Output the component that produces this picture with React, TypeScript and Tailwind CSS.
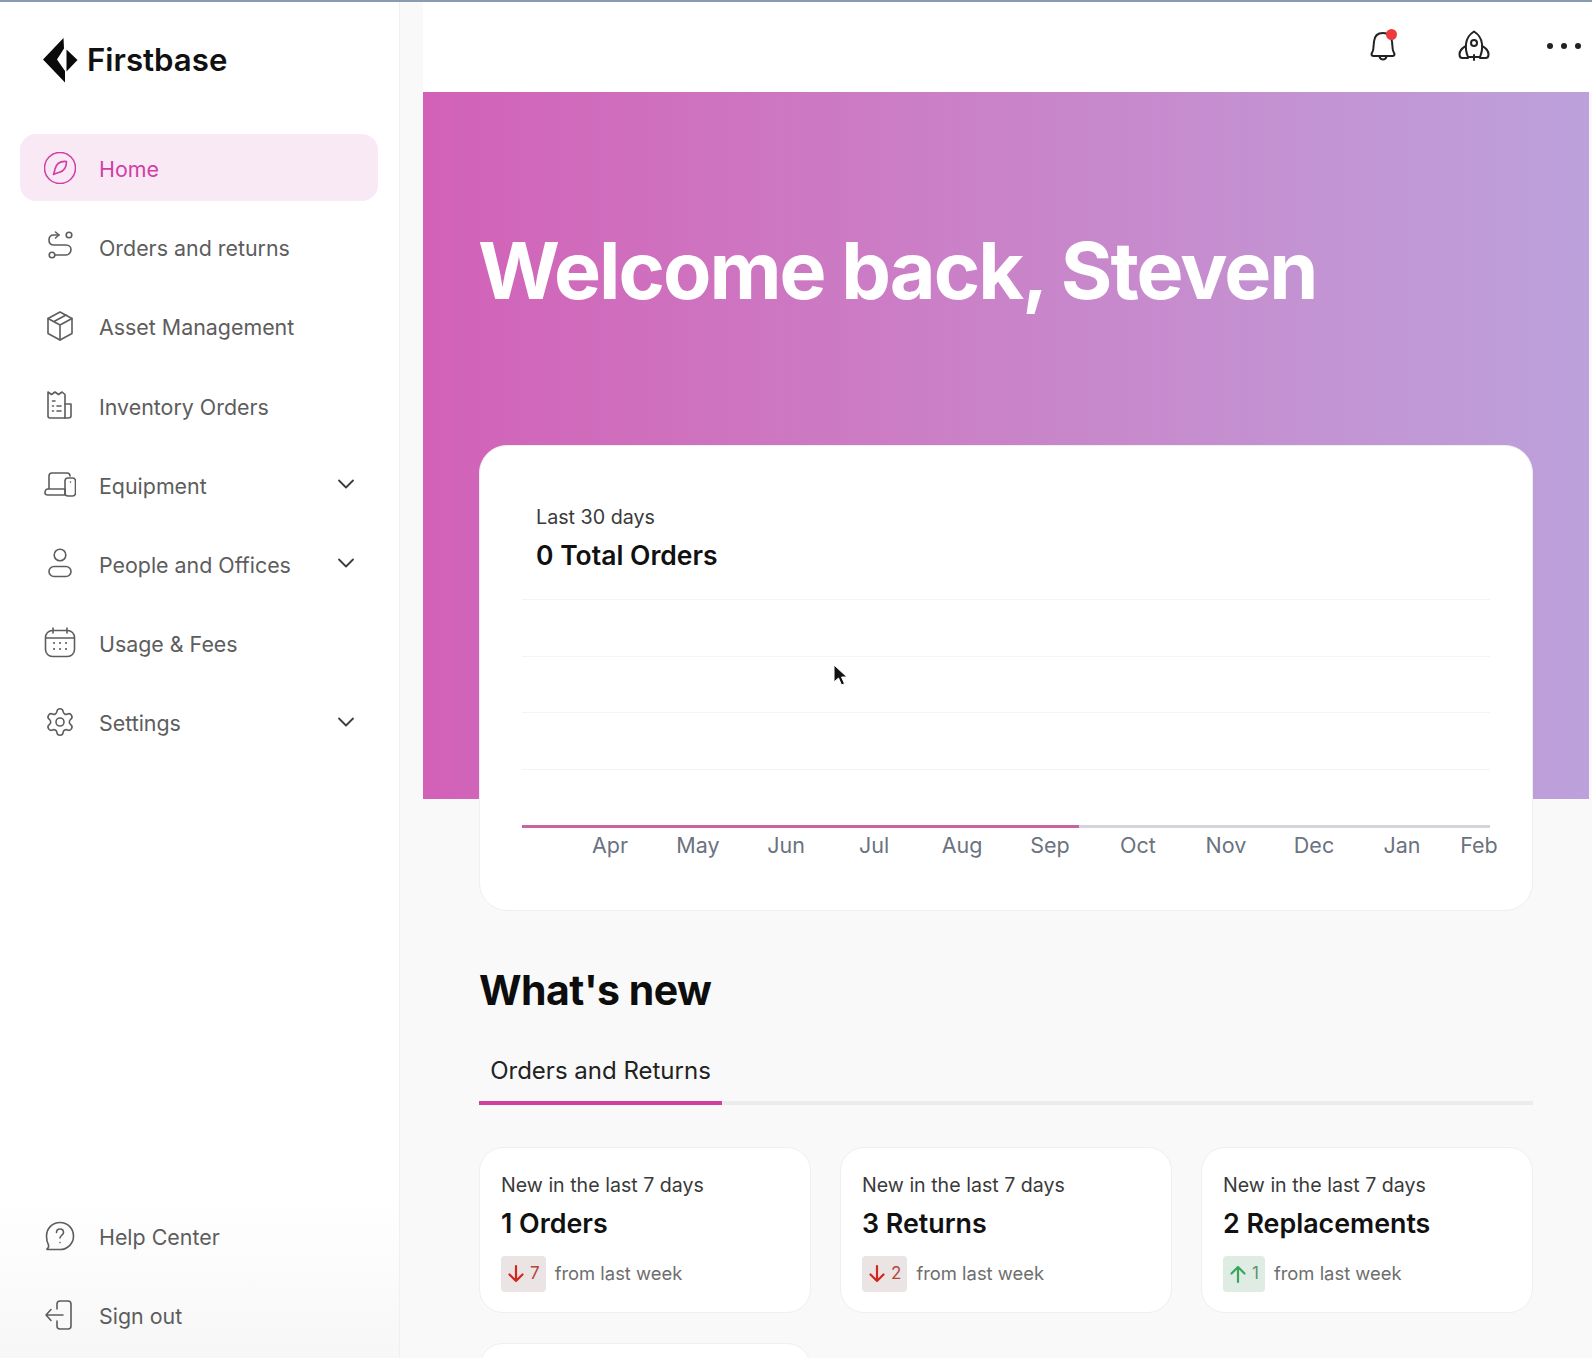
import React from "react";
import { Settings } from "lucide-react";

const font = { fontFamily: "Inter, 'Liberation Sans', sans-serif" };

function Ico({ children }: { children: React.ReactNode }) {
  return (
    <svg width="32" height="32" viewBox="0 0 32 32" fill="none" stroke="currentColor" strokeWidth="1.6" strokeLinecap="round" strokeLinejoin="round">
      {children}
    </svg>
  );
}

const icons: Record<string, React.ReactNode> = {
  home: (<><circle cx="16" cy="16" r="15.5" /><path d="M22.500 9.500c-5.500-.5-10 1.500-11.500 7.500-.2 1-.8 3.500-1.500 5.500 2-1 4.500-1.700 5.500-2 6-1.500 7.500-5.500 7.500-11z" /></>),
  orders: (<><path d="M15 4h-5C7 4 5 6 5 9s2 5 5 5h12c3 0 5 2 5 4.500S25 24 22 24H11" /><path d="M11.500 1 15 4l-3.500 3" /><circle cx="25" cy="4" r="2.800" /><circle cx="8" cy="24" r="2.800" /></>),
  asset: (<><path d="M16 2 28 8.500v15L16 30 4 23.500v-15z" /><path d="M4 8.500 16 15l12-6.500M16 15v15M22 5 10 11.500" /></>),
  inventory: (<><path d="M4 27V3l3.500 2.500L11 3l3.500 2.500L18 3l3 2.500V29H6c-1 0-2-1-2-2z" /><path d="M21 15h6v12c0 1.500-1.500 2-3 2h-3" /><path d="M8.500 12h2.500M8.500 17h1M13 17h4M8.500 22h1M13 22h4" /></>),
  equipment: (<><path d="M5 21V8c0-2 1-3 3-3h15c2 0 3 1 3 3M1 25c0-2 1-4 3-4h17v6H4c-1.500 0-3-.5-3-2z" /><rect x="21" y="10" width="10.500" height="18" rx="3" /><path d="M26.500 14v.1" /></>),
  people: (<><circle cx="16" cy="8" r="5.800" /><rect x="5" y="19.500" width="22" height="10" rx="5" /></>),
  usage: (<><rect x="1.500" y="3.500" width="29" height="26" rx="7" /><path d="M2 11h28M9 1v5M23 1v5" /><path d="M10 16h.1M16 16h.1M22 16h.1M10 22h.1M16 22h.1M22 22h.1" strokeWidth="2" /></>),
  help: (<><path d="M3 29c1.500-1 2-2 1.500-4C3 22.500 2.500 19.500 2.500 16 2.500 8.500 8.500 2.500 16 2.500S29.500 8.500 29.500 16 23.500 29.500 16 29.500H3z" /><path d="M12.500 12.500c0-2 1.500-3.500 3.500-3.500s3.500 1.500 3.500 3.500c0 2.500-3.500 3-3.500 5.500M16 22.500v.1" /></>),
  signout: (<><path d="M13 10V5c0-2 1-3 3-3h8c2 0 3 1 3 3v22c0 2-1 3-3 3h-8c-2 0-3-1-3-3v-5" /><path d="M19 16H2M7 10.500 2 16l5 5.500" /></>),
};

function Chevron() {
  return (
    <svg width="20" height="20" viewBox="0 0 20 20" fill="none" stroke="#3c3c3c" strokeWidth="1.800" strokeLinecap="round" strokeLinejoin="round">
      <path d="M3 6.500 10 13.500 17 6.500" />
    </svg>
  );
}

function NavItem({ icon, label, chev, active }: { icon: string; label: string; chev?: boolean; active?: boolean }) {
  return (
    <div className={`flex h-[67px] items-center rounded-[16px] pl-[24px] pr-[22px] ${active ? "bg-[#f9e9f5] text-[#d13fa6]" : "text-[#5d5d5d]"}`}>
      <span className="flex w-[32px] shrink-0 items-center justify-center">
        {icon === "settings" ? <Settings size={32} strokeWidth={1.2} /> : <Ico>{icons[icon]}</Ico>}
      </span>
      <span className="ml-[23px] flex-1 pt-[3px] text-[21.4px] leading-[30px]">{label}</span>
      {chev && <Chevron />}
    </div>
  );
}

function Stat({ title, n, dir }: { title: string; n: number; dir: "up" | "down" }) {
  const up = dir === "up";
  return (
    <div className="h-[166px] rounded-[24px] border border-[#efefef] bg-white pl-[21px] pt-[22px]">
      <div className="text-[19.6px] leading-[30px] text-[#3a3a3a]">New in the last 7 days</div>
      <div className="mt-[1px] text-[26.8px] font-semibold leading-[44px] text-[#111]">{title}</div>
      <div className="mt-[11px] flex items-center">
        <span className={`flex h-[36px] items-center gap-[5px] rounded-[4px] px-[6px] text-[17px] ${up ? "bg-[#deece3] text-[#5f8f70]" : "bg-[#ebe4e4] text-[#b2453c]"}`}>
          <svg width="18" height="20" viewBox="0 0 18 20" fill="none" stroke={up ? "#3aa65c" : "#d2281c"} strokeWidth="2.200" strokeLinecap="round" strokeLinejoin="round">
            {up ? <path d="M9 18V3M2.500 9.500 9 3l6.500 6.500" /> : <path d="M9 2v15M2.500 10.500 9 17l6.500-6.500" />}
          </svg>
          {n}
        </span>
        <span className="ml-[9px] text-[18.4px] text-[#6e6e6e]">from last week</span>
      </div>
    </div>
  );
}

const months = ["Apr", "May", "Jun", "Jul", "Aug", "Sep", "Oct", "Nov", "Dec", "Jan"];

export default function App() {
  return (
    <div style={font} className="flex h-[1358px] w-[1592px] flex-col overflow-hidden bg-[#f9f9f9]">
      <div className="h-[2px] shrink-0 bg-[#8a9bb0]" />
      <div className="flex min-h-0 flex-1">
        <aside className="flex w-[400px] shrink-0 flex-col border-r border-[#f0f0f0] bg-gradient-to-b from-white from-[88%] to-[#f7f7f7] pl-[20px] pr-[21px]">
          <div className="flex h-[132px] items-center pb-[16px] pl-[23px]">
            <svg width="36" height="45" viewBox="0 0 36 45" fill="#0a0a0a">
              <path d="M20.500 0 0 21.500 22 44.500V33L14 21.500 21 10.500z" />
              <path d="M23.500 11.500 34.500 22 23.500 33.500z" />
            </svg>
            <span className="ml-[8px] text-[31.2px] font-semibold text-[#111]">Firstbase</span>
          </div>
          <nav className="flex flex-col gap-[12.2px]">
            <NavItem icon="home" label="Home" active />
            <NavItem icon="orders" label="Orders and returns" />
            <NavItem icon="asset" label="Asset Management" />
            <NavItem icon="inventory" label="Inventory Orders" />
            <NavItem icon="equipment" label="Equipment" chev />
            <NavItem icon="people" label="People and Offices" chev />
            <NavItem icon="usage" label="Usage & Fees" />
            <NavItem icon="settings" label="Settings" chev />
          </nav>
          <div className="mt-auto flex flex-col gap-[12px] pb-[10px]">
            <NavItem icon="help" label="Help Center" />
            <NavItem icon="signout" label="Sign out" />
          </div>
        </aside>
        <main className="ml-[23px] flex w-[1166px] shrink-0 flex-col">
          <header className="-mr-[3px] flex h-[90px] shrink-0 items-center justify-end bg-white pb-[2px] pr-[11px]">
            <span className="relative mr-[62px]">
              <svg width="26" height="30" viewBox="0 0 26 30" fill="none" stroke="#222" strokeWidth="2" strokeLinejoin="round" strokeLinecap="round">
                <path d="M1.500 23c0-1 1.500-2 1.800-5l.7-7.500C4.500 5 8 2 13 2s8.500 3 9 8.500l.7 7.500c.3 3 1.800 4 1.800 5 0 1-1 2-2 2h-19c-1 0-2-1-2-2z" />
                <path d="M9.500 25.500c.5 2 2 3 3.500 3s3-1 3.500-3" />
              </svg>
              <span className="absolute right-[-1px] top-[-2px] h-[11px] w-[11px] rounded-full bg-[#ee3a3a]" />
            </span>
            <svg width="32" height="32" viewBox="0 0 32 32" fill="none" stroke="#222" strokeWidth="2" strokeLinejoin="round" strokeLinecap="round">
              <path d="M10 27C8 22 7.500 18 8 14 8.500 8.500 12 4 16 1.500 20 4 23.500 8.500 24 14c.5 4 0 8-2 13z" />
              <circle cx="16" cy="13" r="3" />
              <path d="M8 16c-3 1.500-6.500 4-6.500 8.500 0 2 1 3.500 3 3.500H10M24 16c3 1.500 6.500 4 6.500 8.500 0 2-1 3.500-3 3.500H22M16 25v5" />
            </svg>
            <span className="ml-[57px] flex gap-[8px]">
              <span className="h-[6px] w-[6px] rounded-full bg-[#222]" />
              <span className="h-[6px] w-[6px] rounded-full bg-[#222]" />
              <span className="h-[6px] w-[6px] rounded-full bg-[#222]" />
            </span>
          </header>
          <section className="h-[707px] shrink-0 bg-gradient-to-r from-[#d261b7] to-[#bca1db] px-[56px]">
            <h1 className="-ml-[1px] pt-[128px] text-[79px] font-bold leading-[100px] tracking-[-2px] text-white">Welcome back, Steven</h1>
            <div className="relative mt-[125px] h-[466px] rounded-[28px] border border-[#efefef] bg-white pl-[42px] pr-[42px] pt-[57px]">
              <div className="pl-[14px] text-[19.7px] leading-[28px] text-[#3a3a3a]">Last 30 days</div>
              <div className="mt-[7px] pl-[14px] text-[26.5px] font-semibold leading-[34px] text-[#111]">0 Total Orders</div>
              <div className="mt-[27px] flex h-[229px] flex-col justify-between">
                <div className="h-px bg-[#f4f4f4]" />
                <div className="h-px bg-[#f4f4f4]" />
                <div className="h-px bg-[#f4f4f4]" />
                <div className="h-px bg-[#f4f4f4]" />
                <div className="flex h-[3px]">
                  <div className="w-[557px] bg-[#c8659f]" />
                  <div className="flex-1 bg-[#d3d5da]" />
                </div>
              </div>
              <div className="mt-[2px] flex pl-[44px] text-[21.5px] leading-[30px] text-[#6b7280]">
                {months.map((m) => (<span key={m} className="w-[88px] shrink-0 text-center">{m}</span>))}
                <span className="-ml-[11px] w-[88px] shrink-0 text-center">Feb</span>
              </div>
            </div>
          </section>
          <section className="shrink-0 px-[56px] pt-[163px]">
            <h2 className="text-[41px] font-bold leading-[56px] tracking-[-0.5px] text-[#0d0d0d]">What's new</h2>
            <div className="mt-[35px] border-b-[4px] border-[#ececec]">
              <div className="-mb-[4px] w-[243px] border-b-[4px] border-[#d13f9f] pb-[12px] text-center text-[24px] leading-[36px] text-[#222]">Orders and Returns</div>
            </div>
            <div className="mt-[42px] grid grid-cols-3 gap-x-[29px] gap-y-[30px]">
              <Stat title="1 Orders" n={7} dir="down" />
              <Stat title="3 Returns" n={2} dir="down" />
              <Stat title="2 Replacements" n={1} dir="up" />
              <div className="h-[166px] rounded-[24px] border border-[#efefef] bg-white" />
            </div>
          </section>
        </main>
      </div>
      <svg width="16" height="24" viewBox="0 0 16 24" className="absolute left-[833px] top-[664px]">
        <path d="M1 1v17l4.500-4 3 7 3-1.300-3-6.700H14z" fill="#111" stroke="#fff" strokeWidth="1" />
      </svg>
    </div>
  );
}
